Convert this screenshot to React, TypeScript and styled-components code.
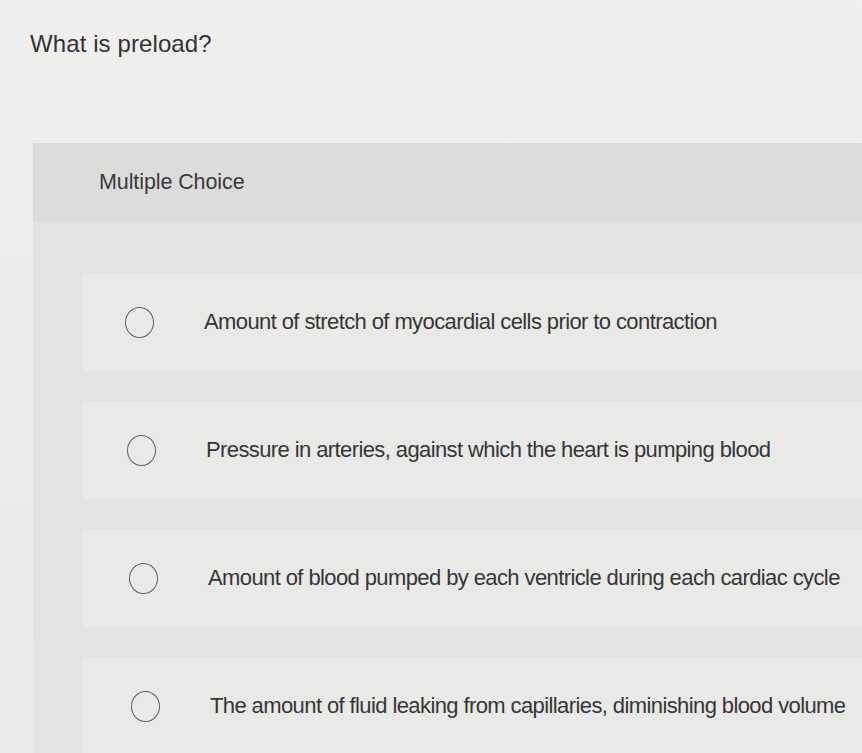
import React from "react";
import styled, { createGlobalStyle } from "styled-components";

const Global = createGlobalStyle`
  html, body { margin: 0; padding: 0; background: #ebebea; }
  body { font-family: "Liberation Sans", Arial, sans-serif; color: #3a3a3a; overflow: hidden; }
`;

const Page = styled.div`
  width: 862px;
  height: 753px;
  overflow: hidden;
  background: linear-gradient(180deg, #efefee 0%, #e9e9e8 100%);
`;

const Title = styled.h1`
  margin: 0;
  padding: 30px 0 0 30px;
  font-size: 24px;
  font-weight: 400;
  letter-spacing: 0.1px;
  color: #333;
  height: 143px;
  box-sizing: border-box;
`;

const Panel = styled.section`
  margin-left: 33px;
  width: 860px;
  background: #e0e0df;
`;

const PanelHeader = styled.div`
  height: 78px;
  display: flex;
  align-items: center;
  padding-left: 66px;
  font-size: 21.5px;
  letter-spacing: -0.1px;
  color: #3a3a3a;
  background: #dcdcdb;
`;

const Options = styled.div`
  display: flex;
  flex-direction: column;
  gap: 30px;
  padding: 52px 0 60px 49px;
  background: #e3e3e2;
`;

const Card = styled.label`
  display: flex;
  align-items: center;
  height: 98px;
  background: #e9e9e8;
  padding-left: ${(p: { $shift: number }) => 43 + p.$shift}px;
`;

const Radio = styled.span`
  width: 27px;
  height: 29px;
  border: 1.8px solid #606060;
  border-radius: 50%;
  flex-shrink: 0;
  margin-right: 50px;
`;

const OptionText = styled.span`
  font-size: 22px;
  color: #363636;
  letter-spacing: -0.6px;
  white-space: nowrap;
`;

const options = [
  "Amount of stretch of myocardial cells prior to contraction",
  "Pressure in arteries, against which the heart is pumping blood",
  "Amount of blood pumped by each ventricle during each cardiac cycle",
  "The amount of fluid leaking from capillaries, diminishing blood volume",
];

export default function App() {
  return (
    <Page>
      <Global />
      <Title>What is preload?</Title>
      <Panel>
        <PanelHeader>Multiple Choice</PanelHeader>
        <Options>
          {options.map((o, i) => (
            <Card key={i} $shift={i * 2}>
              <Radio />
              <OptionText>{o}</OptionText>
            </Card>
          ))}
        </Options>
      </Panel>
    </Page>
  );
}
